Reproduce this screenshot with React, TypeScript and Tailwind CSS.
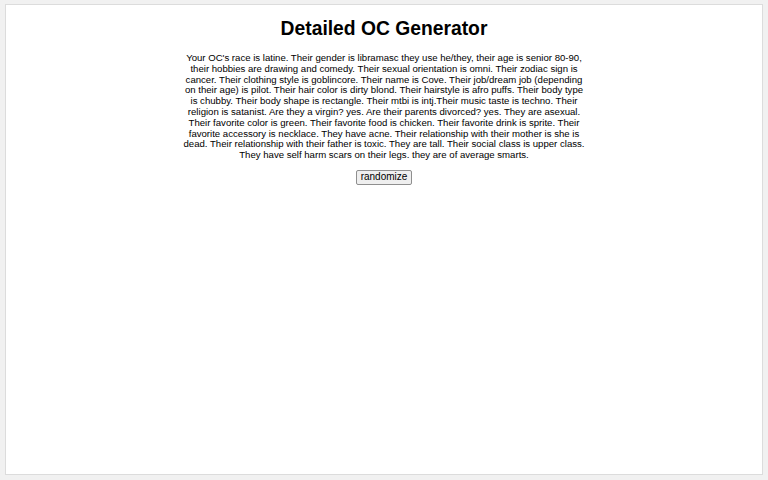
export default function App() {
  return (
    <div className="min-h-screen w-full bg-[#f1f1f1] p-[4px_5px_5px_5px]" style={{ fontFamily: '"Liberation Sans", Arial, sans-serif' }}>
      <div className="h-[471px] w-full border border-[#dcdcdc] bg-white flex flex-col items-center text-black">
        <h1 className="mt-[12px] text-[19.3px] font-bold leading-[23px]">Detailed OC Generator</h1>
        <p className="mt-[13px] w-[404px] text-center text-[9.6px] leading-[10.8px]">
          Your OC's race is latine. Their gender is libramasc they use he/they, their age is senior 80-90, their hobbies are drawing and comedy. Their sexual orientation is omni. Their zodiac sign is cancer. Their clothing style is goblincore. Their name is Cove. Their job/dream job (depending on their age) is pilot. Their hair color is dirty blond. Their hairstyle is afro puffs. Their body type is chubby. Their body shape is rectangle. Their mtbi is intj.Their music taste is techno. Their religion is satanist. Are they a virgin? yes. Are their parents divorced? yes. They are asexual. Their favorite color is green. Their favorite food is chicken. Their favorite drink is sprite. Their favorite accessory is necklace. They have acne. Their relationship with their mother is she is dead. Their relationship with their father is toxic. They are tall. Their social class is upper class. They have self harm scars on their legs. they are of average smarts.
        </p>
        <button className="mt-[9px] h-[15px] px-[4px] text-[10px] leading-[12px] bg-[#efefef] border border-[#8f8f8f] rounded-[2px]">
          randomize
        </button>
      </div>
    </div>
  );
}
